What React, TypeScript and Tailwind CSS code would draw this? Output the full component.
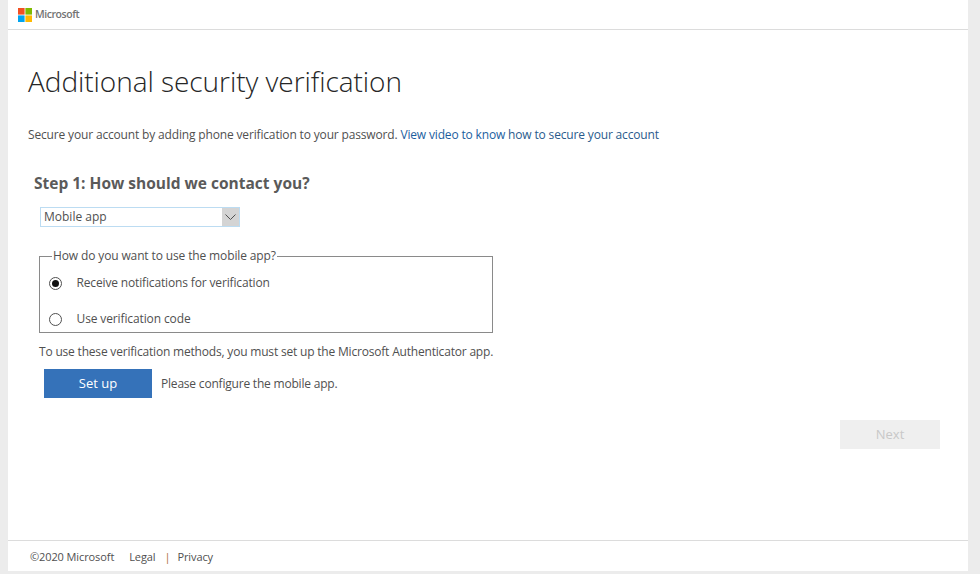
export default function App() {
  return (
    <div className="h-[574px] bg-[#ececec] pl-2 pr-3 pb-[3px] font-['Open_Sans',sans-serif] text-[12px] text-[#505050]">
      <div className="flex h-full flex-col bg-white">
        {/* Header */}
        <header className="flex h-[30px] shrink-0 items-center gap-[3px] border-b border-[#dcdcdc] pl-2.5">
          <svg width="14" height="14" viewBox="0 0 14 14">
            <rect x="0" y="0" width="6.6" height="6.6" fill="#f25022" />
            <rect x="7.4" y="0" width="6.6" height="6.6" fill="#7fba00" />
            <rect x="0" y="7.4" width="6.6" height="6.6" fill="#00a4ef" />
            <rect x="7.4" y="7.4" width="6.6" height="6.6" fill="#ffb900" />
          </svg>
          <span className="text-[10.5px] font-semibold tracking-[-0.45px] text-[#737373]">Microsoft</span>
        </header>

        <main className="relative flex-1 pl-5">
          <h1 className="mt-[32px] text-[28px] leading-[38px] font-light tracking-[-0.05px] text-[#262626]">Additional security verification</h1>

          <p className="mt-[27px] leading-[16px] tracking-[-0.16px]">
            Secure your account by adding phone verification to your password.{" "}
            <span className="text-[#1b5e9e]">View video to know</span>{" "}
            <span className="text-[#2a5b8c]">how to secure your account</span>
          </p>

          <h2 className="ml-1.5 mt-[30px] text-[15.5px] leading-[20px] font-bold text-[#5a5a5a]">Step 1: How should we contact you?</h2>

          <div className="ml-3 mt-[14px] flex h-5 w-[200px] items-center border border-[#bcdcf2] pl-[3px]">
            <span className="flex-1">Mobile app</span>
            <span className="flex h-full w-[17px] items-center justify-center bg-[#d4d4d4]">
              <svg width="11" height="7" viewBox="0 0 11 7" fill="none" stroke="#505050" strokeWidth="1">
                <path d="M0.5 0.5 L5.5 5.5 L10.5 0.5" />
              </svg>
            </span>
          </div>

          <fieldset className="ml-[11px] mt-[21px] h-[85px] w-[454px] border border-[#8a8a8a] pl-[9px]">
            <legend className="ml-[3px] px-px leading-[16px] tracking-[-0.13px]">How do you want to use the mobile app?</legend>
            <div className="flex flex-col gap-[20px] pt-[11px]">
              <label className="flex h-4 items-center gap-[14.5px]">
                <span className="flex size-[13px] items-center justify-center rounded-full border border-[#505050]">
                  <span className="size-[7px] rounded-full bg-[#111]" />
                </span>
                <span className="tracking-[-0.15px]">Receive notifications for verification</span>
              </label>
              <label className="flex h-4 items-center gap-[14.5px]">
                <span className="size-[13px] rounded-full border border-[#505050]" />
                <span className="tracking-[-0.12px]">Use verification code</span>
              </label>
            </div>
          </fieldset>

          <p className="ml-[11px] mt-[11px] leading-[16px] tracking-[-0.19px]">
            To use these verification methods, you must set up the Microsoft Authenticator app.
          </p>

          <div className="ml-4 mt-[9px] flex items-center gap-[9px]">
            <button className="h-[29px] w-[108px] bg-[#3572b9] pt-px text-[13px] text-white">Set up</button>
            <span className="pt-px tracking-[-0.2px]">Please configure the mobile app.</span>
          </div>

          <div className="mr-7 mt-[22px] flex justify-end">
            <button className="h-[29px] w-[100px] bg-[#efefef] pt-px text-[13px] text-[#c8c8c8]">Next</button>
          </div>
        </main>

        {/* Footer */}
        <footer className="flex h-[31px] shrink-0 items-center border-t border-[#dcdcdc] pl-[22px] pt-0.5 text-[11px] tracking-[-0.1px]">
          <span>©2020 Microsoft</span>
          <span className="ml-[15px]">Legal</span>
          <span className="ml-[9px] text-[#b0703a]">|</span>
          <span className="ml-[7px] tracking-[-0.1px]">Privacy</span>
        </footer>
      </div>
    </div>
  );
}
